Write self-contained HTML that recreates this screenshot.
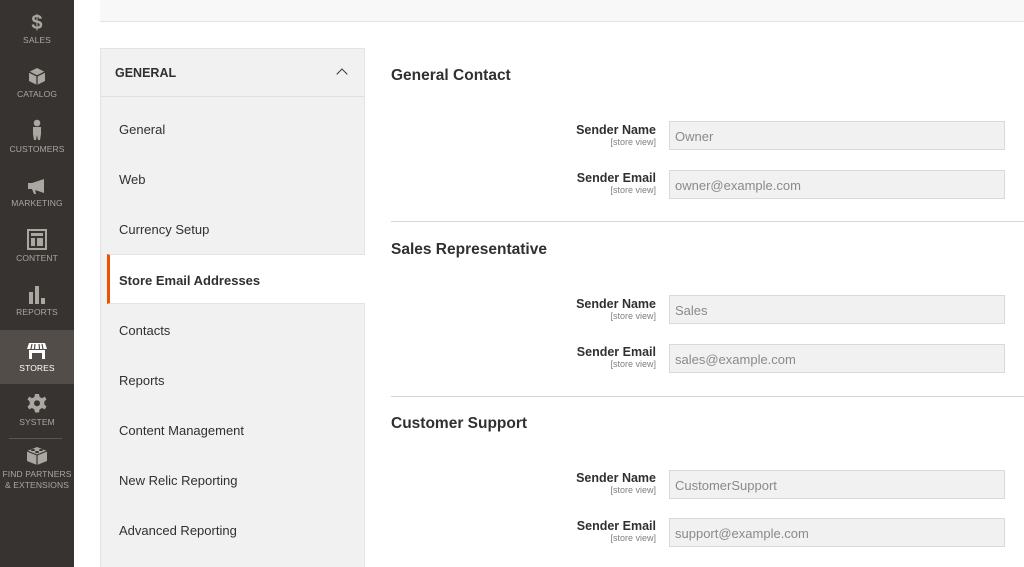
<!DOCTYPE html>
<html style="width:1024px;height:567px;overflow:hidden"><head><meta charset="utf-8"><style>
*{margin:0;padding:0;box-sizing:border-box}
body{width:1024px;height:567px;overflow:hidden;background:#fff;font-family:"Liberation Sans",sans-serif;position:relative;color:#303030}
.side{position:absolute;left:0;top:0;width:74px;height:567px;background:#373330}
.it{position:absolute;left:0;width:74px;height:54px;text-align:center;color:#aaa6a0;font-size:8.5px;letter-spacing:.1px}
.it svg{display:block;margin:0 auto 3px}
.it.act{background:#524d49;color:#fff}
.top{position:absolute;left:100px;top:0;right:0;height:22px;background:#f8f8f8;border-bottom:1px solid #e3e3e3}
.panel{position:absolute;left:100px;top:48px;width:265px;height:530px;background:#f1f1f1;border:1px solid #e3e3e3}
.ph{height:48px;border-bottom:1px solid #e0e0e0;font-weight:bold;font-size:12.5px;padding:17px 0 0 14px;color:#303030;position:relative}
.ph span{position:absolute;right:18px;top:21px;width:8px;height:8px;border-left:1.5px solid #333;border-top:1.5px solid #333;transform:rotate(45deg)}
.li{position:absolute;left:0;width:263px;height:50px;font-size:13px;padding:18px 0 0 18px;color:#303030}
.li.act{left:6px;width:258px;background:#fff;border-left:3px solid #eb5202;padding-left:9px;font-weight:bold;color:#303030;border-top:1px solid #e3e3e3;border-bottom:1px solid #e3e3e3}
h2{position:absolute;left:391px;font-size:15.5px;font-weight:bold;color:#303030}
.lab{position:absolute;right:368px;text-align:right;font-size:12.5px;font-weight:bold;color:#303030;line-height:14px}
.lab small{display:block;font-size:9px;font-weight:normal;color:#808080;line-height:11px}
.inp{position:absolute;left:669px;width:336px;height:29px;background:#f1f1f1;border:1px solid #d9d9d9;font-size:13px;color:#8a8a8a;padding:7px 0 0 5px}
.hr{position:absolute;left:391px;right:0;height:1px;background:#d6d6d6}
</style></head><body>
<div class="side">
<div class="it" style="top:12px"><svg width="14" height="20" viewBox="0 0 14 20"><text x="7" y="17" text-anchor="middle" font-size="20" font-weight="bold" fill="#aaa6a0" font-family="Liberation Sans">$</text></svg>SALES</div>
<div class="it" style="top:67px"><svg width="18" height="19" viewBox="0 0 18 19"><path d="M9 1L17 5V14L9 18L1 14V5Z" fill="#aaa6a0"/><path d="M1 5L9 9L17 5M9 9V18" stroke="#373330" stroke-width="1.3" fill="none"/></svg>CATALOG</div>
<div class="it" style="top:119px"><svg width="12" height="22" viewBox="0 0 12 22"><circle cx="6" cy="4" r="3.3" fill="#aaa6a0"/><path d="M2 8H10V15L9 21H7L6 16L5 21H3L2 15Z" fill="#aaa6a0"/></svg>CUSTOMERS</div>
<div class="it" style="top:178px"><svg width="20" height="17" viewBox="0 0 20 17"><path d="M1 5H5L17 1V15L5 11H1Z" fill="#aaa6a0"/><path d="M5 11L7 16H9L8 11Z" fill="#aaa6a0"/></svg>MARKETING</div>
<div class="it" style="top:229px"><svg width="20" height="21" viewBox="0 0 20 21"><rect x="1" y="1" width="18" height="19" fill="none" stroke="#aaa6a0" stroke-width="2"/><rect x="4" y="4" width="12" height="3" fill="#aaa6a0"/><rect x="4" y="9" width="4" height="8" fill="#aaa6a0"/><rect x="10" y="9" width="6" height="8" fill="#aaa6a0"/></svg>CONTENT</div>
<div class="it" style="top:285px"><svg width="20" height="19" viewBox="0 0 20 19"><rect x="2" y="7" width="4" height="12" fill="#aaa6a0"/><rect x="8" y="1" width="4" height="18" fill="#aaa6a0"/><rect x="14" y="13" width="4" height="6" fill="#aaa6a0"/></svg>REPORTS</div>
<div class="it act" style="top:330px;padding-top:12px;height:54px"><svg width="22" height="18" viewBox="0 0 22 18"><path d="M3 1H19L21 7H1Z" fill="#fff"/><path d="M6 2L5 7M9 2L8.5 7M13 2L13.5 7M16 2L17 7" stroke="#524d49" stroke-width="1.2"/><path d="M3 8H19V17H3Z" fill="#fff"/><rect x="6" y="11" width="10" height="6" fill="#524d49"/></svg>STORES</div>
<div class="it" style="top:394px"><svg width="20" height="20" viewBox="0 0 20 20"><path d="M8 0H12L12.6 3L15 4.2L17.8 2.6L19.5 5.5L17.3 7.5V10.5L19.5 12.5L17.8 15.4L15 14L12.6 15.5L12 18.5H8L7.4 15.5L5 14L2.2 15.4L.5 12.5L2.7 10.5V7.5L.5 5.5L2.2 2.6L5 4.2L7.4 3Z" fill="#aaa6a0"/><circle cx="10" cy="9.3" r="3" fill="#373330"/></svg>SYSTEM</div>
<div style="position:absolute;left:9px;top:438px;width:53px;height:1px;background:#5a5652"></div>
<div class="it" style="top:446px;line-height:11px"><svg width="22" height="20" viewBox="0 0 22 20"><path d="M11 1L21 5V15L11 19L1 15V5Z" fill="#aaa6a0"/><path d="M1 5L11 9L21 5M11 9V19" stroke="#373330" stroke-width="1.2" fill="none"/><ellipse cx="7" cy="4" rx="2" ry="1" fill="#373330"/><ellipse cx="15" cy="4" rx="2" ry="1" fill="#373330"/><ellipse cx="11" cy="6" rx="2" ry="1" fill="#373330"/></svg>FIND PARTNERS<br>&amp; EXTENSIONS</div>
</div>
<div class="top"></div>
<div class="panel">
<div class="ph">GENERAL<span></span></div>
</div>
<div class="li" style="top:104px;left:101px">General</div>
<div class="li" style="top:154px;left:101px">Web</div>
<div class="li" style="top:204px;left:101px">Currency Setup</div>
<div class="li act" style="top:254px;left:107px">Store Email Addresses</div>
<div class="li" style="top:305px;left:101px">Contacts</div>
<div class="li" style="top:355px;left:101px">Reports</div>
<div class="li" style="top:405px;left:101px">Content Management</div>
<div class="li" style="top:455px;left:101px">New Relic Reporting</div>
<div class="li" style="top:505px;left:101px">Advanced Reporting</div>

<h2 style="top:67px">General Contact</h2>
<div class="lab" style="top:123px">Sender Name<small>[store view]</small></div>
<div class="inp" style="top:121px">Owner</div>
<div class="lab" style="top:171px">Sender Email<small>[store view]</small></div>
<div class="inp" style="top:170px">owner@example.com</div>
<div class="hr" style="top:221px"></div>

<h2 style="top:241px">Sales Representative</h2>
<div class="lab" style="top:297px">Sender Name<small>[store view]</small></div>
<div class="inp" style="top:295px">Sales</div>
<div class="lab" style="top:345px">Sender Email<small>[store view]</small></div>
<div class="inp" style="top:344px">sales@example.com</div>
<div class="hr" style="top:396px"></div>

<h2 style="top:415px">Customer Support</h2>
<div class="lab" style="top:471px">Sender Name<small>[store view]</small></div>
<div class="inp" style="top:470px">CustomerSupport</div>
<div class="lab" style="top:519px">Sender Email<small>[store view]</small></div>
<div class="inp" style="top:518px">support@example.com</div>
</body></html>
